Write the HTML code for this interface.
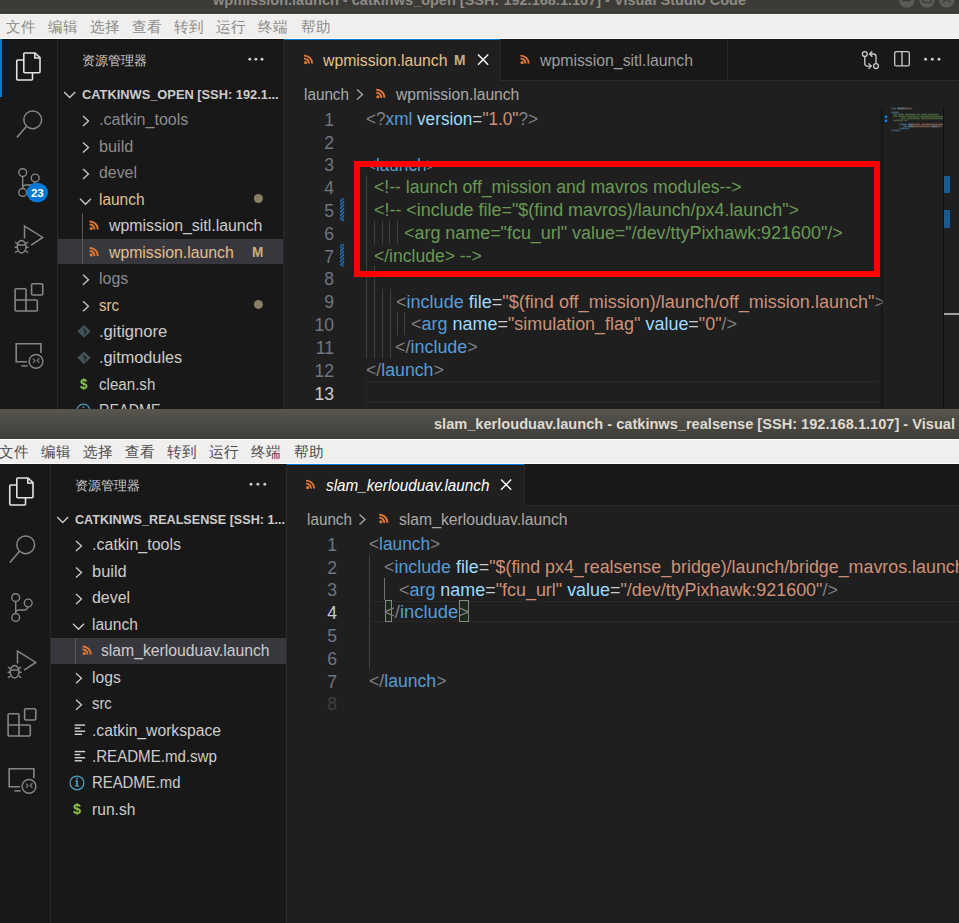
<!DOCTYPE html>
<html><head><meta charset="utf-8"><style>html,body{margin:0;padding:0}
body{width:959px;height:923px;overflow:hidden;position:relative;background:#181818;font-family:"Liberation Sans",sans-serif}
.t{position:absolute;white-space:pre;transform-origin:0 0}
</style></head><body>
<div style="position:absolute;left:0px;top:0px;width:959px;height:14px;background:#3c3b37;"></div>
<div class="t" style="left:213.00px;top:-8.10px;font-size:15px;line-height:15px;color:#8d8b84;font-weight:bold;font-style:normal;transform:scaleX(0.9678);">wpmission.launch - catkinws_open [SSH: 192.168.1.107] - Visual Studio Code</div>
<svg style="position:absolute;left:0;top:0" width="959" height="923"><circle cx="906.8" cy="0" r="7.8" fill="#5b5a55"/><circle cx="927" cy="0" r="7.8" fill="#5b5a55"/><circle cx="946.7" cy="0" r="7.8" fill="#5b5a55"/><path d="M902.5 0.5 H911" stroke="#3c3b37" stroke-width="1.6"/><rect x="923" y="-3" width="8" height="5.5" fill="none" stroke="#3c3b37" stroke-width="1.2"/><path d="M943 2.5 L946.7 -1 L950.4 2.5" fill="none" stroke="#3c3b37" stroke-width="1.3"/></svg>
<div style="position:absolute;left:0px;top:14px;width:959px;height:25px;background:#f0efed;"></div>
<div style="position:absolute;left:0px;top:14px;width:959px;height:1px;background:#fafaf9;"></div>
<div style="position:absolute;left:0px;top:38px;width:959px;height:1px;background:#fbfbfa;"></div>
<div class="t" style="left:6.40px;top:19.93px;font-size:14.5px;line-height:14.5px;color:#8c8c8c;font-weight:normal;font-style:normal;transform:scaleX(0.9733);">文件</div>
<div class="t" style="left:47.90px;top:19.93px;font-size:14.5px;line-height:14.5px;color:#8c8c8c;font-weight:normal;font-style:normal;transform:scaleX(0.9733);">编辑</div>
<div class="t" style="left:90.40px;top:19.93px;font-size:14.5px;line-height:14.5px;color:#8c8c8c;font-weight:normal;font-style:normal;transform:scaleX(0.9733);">选择</div>
<div class="t" style="left:132.00px;top:19.93px;font-size:14.5px;line-height:14.5px;color:#8c8c8c;font-weight:normal;font-style:normal;transform:scaleX(0.9733);">查看</div>
<div class="t" style="left:173.80px;top:19.93px;font-size:14.5px;line-height:14.5px;color:#8c8c8c;font-weight:normal;font-style:normal;transform:scaleX(0.9733);">转到</div>
<div class="t" style="left:216.00px;top:19.93px;font-size:14.5px;line-height:14.5px;color:#8c8c8c;font-weight:normal;font-style:normal;transform:scaleX(0.9733);">运行</div>
<div class="t" style="left:258.00px;top:19.93px;font-size:14.5px;line-height:14.5px;color:#8c8c8c;font-weight:normal;font-style:normal;transform:scaleX(0.9733);">终端</div>
<div class="t" style="left:300.70px;top:19.93px;font-size:14.5px;line-height:14.5px;color:#8c8c8c;font-weight:normal;font-style:normal;transform:scaleX(0.9733);">帮助</div>
<div style="position:absolute;left:0px;top:39px;width:957px;height:370px;background:#181818;"></div>
<div style="position:absolute;left:0px;top:39px;width:283px;height:1px;background:#111111;"></div>
<div style="position:absolute;left:57px;top:40px;width:1px;height:369px;background:#2b2b2b;"></div>
<div style="position:absolute;left:283px;top:39px;width:1px;height:370px;background:#2b2b2b;"></div>
<div style="position:absolute;left:284px;top:39px;width:675px;height:370px;background:#1f1f1f;"></div>
<div style="position:absolute;left:0px;top:39px;width:2px;height:58px;background:#0078d4;"></div>
<svg style="position:absolute;left:0;top:0" width="959" height="923"><path d="M23.8 60 H17.75 Q16.75 60 16.75 61 V79 Q16.75 80 17.75 80 H31.5 Q32.5 80 32.5 79 V72.8" fill="none" stroke="#e4e4e4" stroke-width="1.6"/><path d="M24.8 53 H35 L40 57.6 V71.8 Q40 72.8 39 72.8 H24.8 Q23.8 72.8 23.8 71.8 V54 Q23.8 53 24.8 53 Z" fill="none" stroke="#e4e4e4" stroke-width="1.6"/><path d="M34.8 53.2 V58 H39.8" fill="none" stroke="#e4e4e4" stroke-width="1.6"/><circle cx="32.7" cy="119.8" r="8.9" fill="none" stroke="#868686" stroke-width="1.5"/><path d="M26.3 126.6 L16.9 137.6" stroke="#868686" stroke-width="1.6"/><circle cx="22.7" cy="172.6" r="3.9" fill="none" stroke="#868686" stroke-width="1.4"/><circle cx="35.2" cy="178" r="3.9" fill="none" stroke="#868686" stroke-width="1.4"/><circle cx="22.7" cy="192.4" r="3.9" fill="none" stroke="#868686" stroke-width="1.4"/><path d="M22.7 176.5 V188.5" stroke="#868686" stroke-width="1.4"/><path d="M22.7 187 Q23 185 26.5 185 H31 Q34 185 35 182" fill="none" stroke="#868686" stroke-width="1.4"/><ellipse cx="37.3" cy="192.5" rx="10.7" ry="9.8" fill="#0078d4"/><text x="37.3" y="197.3" text-anchor="middle" font-family="Liberation Sans" font-weight="bold" font-size="11.5" fill="#ffffff">23</text><path d="M24.5 238.4 V226 L42.75 237.4 L31.1 245.2" fill="none" stroke="#868686" stroke-width="1.5" stroke-linejoin="miter"/><ellipse cx="21.6" cy="246.8" rx="4.4" ry="6.2" fill="none" stroke="#868686" stroke-width="1.5"/><path d="M17.2 245 H26" stroke="#868686" stroke-width="1.5"/><path d="M15 242 L17.6 243.6 M28.2 242 L25.6 243.6 M14.6 247.3 H17.2 M28.6 247.3 H26 M15 252.6 L17.6 251 M28.2 252.6 L25.6 251" stroke="#868686" stroke-width="1.4"/><path d="M16.1 288.8 H25 Q26 288.8 26 289.8 V300 H36.3 Q37.3 300 37.3 301 V310 Q37.3 311 36.3 311 H16.1 Q15.1 311 15.1 310 V289.8 Q15.1 288.8 16.1 288.8 Z M15.1 300 H26 V311" fill="none" stroke="#868686" stroke-width="1.6"/><rect x="31.6" y="283.7" width="11.15" height="11.3" rx="1.2" fill="none" stroke="#868686" stroke-width="1.6"/><path d="M27 361.8 H16.2 V343.7 H40.9 V353" fill="none" stroke="#868686" stroke-width="1.6"/><path d="M21.4 365.9 H27.6" stroke="#868686" stroke-width="1.5"/><circle cx="36" cy="361.3" r="6.9" fill="none" stroke="#868686" stroke-width="1.5"/><path d="M33 358.6 L35 360.8 L33 363 M39.4 358.2 L37.2 360.4 L39.4 362.6" fill="none" stroke="#868686" stroke-width="1.1"/></svg>
<div class="t" style="left:82.00px;top:53.50px;font-size:13px;line-height:13px;color:#cccccc;font-weight:normal;font-style:normal;transform:scaleX(1.0000);">资源管理器</div>
<svg style="position:absolute;left:0;top:0" width="959" height="923"><circle cx="249.8" cy="59.3" r="1.45" fill="#cccccc"/><circle cx="255.9" cy="59.3" r="1.45" fill="#cccccc"/><circle cx="262" cy="59.3" r="1.45" fill="#cccccc"/></svg>
<svg style="position:absolute;left:0;top:0" width="959" height="923"><path d="M64.2 92 L69.7 97.5 L75.2 92" fill="none" stroke="#cccccc" stroke-width="1.3"/></svg>
<div class="t" style="left:82.20px;top:88.20px;font-size:13px;line-height:13px;color:#cccccc;font-weight:bold;font-style:normal;transform:scaleX(0.9872);">CATKINWS_OPEN [SSH: 192.1...</div>
<div style="position:absolute;left:58px;top:238.75px;width:225px;height:25.65px;background:#37373d;"></div>
<div style="position:absolute;left:82px;top:213px;width:1px;height:51.4px;background:#585858;"></div>
<div class="t" style="left:99.00px;top:112.26px;font-size:16px;line-height:16px;color:#8c8c8c;font-weight:normal;font-style:normal;transform:scaleX(1.0052);">.catkin_tools</div>
<div class="t" style="left:99.00px;top:138.73px;font-size:16px;line-height:16px;color:#8c8c8c;font-weight:normal;font-style:normal;transform:scaleX(1.0144);">build</div>
<div class="t" style="left:99.00px;top:165.20px;font-size:16px;line-height:16px;color:#8c8c8c;font-weight:normal;font-style:normal;transform:scaleX(0.9908);">devel</div>
<div class="t" style="left:99.00px;top:191.67px;font-size:16px;line-height:16px;color:#e2c08d;font-weight:normal;font-style:normal;transform:scaleX(0.9649);">launch</div>
<div class="t" style="left:108.60px;top:218.14px;font-size:16px;line-height:16px;color:#cccccc;font-weight:normal;font-style:normal;transform:scaleX(0.9914);">wpmission_sitl.launch</div>
<div class="t" style="left:108.60px;top:244.61px;font-size:16px;line-height:16px;color:#e2c08d;font-weight:normal;font-style:normal;transform:scaleX(0.9875);">wpmission.launch</div>
<div class="t" style="left:99.00px;top:271.08px;font-size:16px;line-height:16px;color:#8c8c8c;font-weight:normal;font-style:normal;transform:scaleX(0.9946);">logs</div>
<div class="t" style="left:99.00px;top:297.55px;font-size:16px;line-height:16px;color:#e2c08d;font-weight:normal;font-style:normal;transform:scaleX(0.9330);">src</div>
<div class="t" style="left:99.00px;top:324.02px;font-size:16px;line-height:16px;color:#cccccc;font-weight:normal;font-style:normal;transform:scaleX(1.0376);">.gitignore</div>
<div class="t" style="left:99.00px;top:350.49px;font-size:16px;line-height:16px;color:#cccccc;font-weight:normal;font-style:normal;transform:scaleX(1.0168);">.gitmodules</div>
<div class="t" style="left:80.40px;top:375.50px;font-size:15px;line-height:15px;color:#8dc149;font-weight:bold;font-style:normal;transform:scaleX(0.8869);">$</div>
<div class="t" style="left:99.00px;top:376.96px;font-size:16px;line-height:16px;color:#cccccc;font-weight:normal;font-style:normal;transform:scaleX(0.9447);">clean.sh</div>
<div class="t" style="left:99.00px;top:403.43px;font-size:16px;line-height:16px;color:#cccccc;font-weight:normal;font-style:normal;transform:scaleX(0.9013);">README</div>
<svg style="position:absolute;left:0;top:0" width="959" height="923"><path d="M83 116.0 L88.5 121.0 L83 126.0" fill="none" stroke="#cccccc" stroke-width="1.3"/><path d="M83 142.46999999999997 L88.5 147.46999999999997 L83 152.46999999999997" fill="none" stroke="#cccccc" stroke-width="1.3"/><path d="M83 168.94 L88.5 173.94 L83 178.94" fill="none" stroke="#cccccc" stroke-width="1.3"/><path d="M80 198.70999999999998 L85.5 204.20999999999998 L91 198.70999999999998" fill="none" stroke="#cccccc" stroke-width="1.3"/><circle cx="91.19999999999999" cy="228.48" r="1.6" fill="#e37933"/><path d="M89.6 224.48 A4.6 4.6 0 0 1 94.5 229.48" fill="none" stroke="#e37933" stroke-width="1.9"/><path d="M89.6 221.48 A7.9 7.9 0 0 1 97.8 229.48" fill="none" stroke="#e37933" stroke-width="1.9"/><circle cx="91.19999999999999" cy="254.94999999999996" r="1.6" fill="#e37933"/><path d="M89.6 250.94999999999996 A4.6 4.6 0 0 1 94.5 255.94999999999996" fill="none" stroke="#e37933" stroke-width="1.9"/><path d="M89.6 247.94999999999996 A7.9 7.9 0 0 1 97.8 255.94999999999996" fill="none" stroke="#e37933" stroke-width="1.9"/><path d="M83 274.82 L88.5 279.82 L83 284.82" fill="none" stroke="#cccccc" stroke-width="1.3"/><path d="M83 301.28999999999996 L88.5 306.28999999999996 L83 311.28999999999996" fill="none" stroke="#cccccc" stroke-width="1.3"/><path d="M84 324.96 L90.6 331.36 L84 337.76 L77.4 331.36 Z" fill="#41535b"/><path d="M83 328.56 L85 330.56 V334.56 M85 330.56 L86.5 332.06" stroke="#181818" stroke-width="1.1" fill="none"/><path d="M84 351.42999999999995 L90.6 357.83 L84 364.22999999999996 L77.4 357.83 Z" fill="#41535b"/><path d="M83 355.03 L85 357.03 V361.03 M85 357.03 L86.5 358.53" stroke="#181818" stroke-width="1.1" fill="none"/><circle cx="83.4" cy="410.77" r="6.6" fill="none" stroke="#519aba" stroke-width="1.3"/><rect x="82.7" y="409.46999999999997" width="1.5" height="5" fill="#519aba"/><rect x="82.7" y="406.46999999999997" width="1.5" height="1.6" fill="#519aba"/></svg>
<svg style="position:absolute;left:0;top:0" width="959" height="923"><circle cx="258.4" cy="198.5" r="4.5" fill="#8a7d65"/><circle cx="258.4" cy="304.4" r="4.5" fill="#8a7d65"/></svg>
<div class="t" style="left:252.40px;top:245.45px;font-size:14px;line-height:14px;color:#c9ae84;font-weight:bold;font-style:normal;transform:scaleX(0.9681);">M</div>
<div style="position:absolute;left:284px;top:39px;width:675px;height:41px;background:#181818;"></div>
<div style="position:absolute;left:284px;top:80px;width:675px;height:1px;background:#2b2b2b;"></div>
<div style="position:absolute;left:284px;top:39px;width:216px;height:42px;background:#1f1f1f;"></div>
<div style="position:absolute;left:284px;top:39px;width:216px;height:1px;background:#0078d4;"></div>
<div style="position:absolute;left:500px;top:39px;width:1px;height:41px;background:#2b2b2b;"></div>
<div style="position:absolute;left:727px;top:39px;width:1px;height:41px;background:#2b2b2b;"></div>
<svg style="position:absolute;left:0;top:0" width="959" height="923"><circle cx="305.6" cy="62.6" r="1.6" fill="#e37933"/><path d="M304 58.6 A4.6 4.6 0 0 1 308.9 63.6" fill="none" stroke="#e37933" stroke-width="1.9"/><path d="M304 55.6 A7.9 7.9 0 0 1 312.2 63.6" fill="none" stroke="#e37933" stroke-width="1.9"/><circle cx="522.1" cy="62.6" r="1.6" fill="#e37933"/><path d="M520.5 58.6 A4.6 4.6 0 0 1 525.4 63.6" fill="none" stroke="#e37933" stroke-width="1.9"/><path d="M520.5 55.6 A7.9 7.9 0 0 1 528.7 63.6" fill="none" stroke="#e37933" stroke-width="1.9"/><circle cx="377.90000000000003" cy="96.8" r="1.6" fill="#e37933"/><path d="M376.3 92.8 A4.6 4.6 0 0 1 381.2 97.8" fill="none" stroke="#e37933" stroke-width="1.9"/><path d="M376.3 89.8 A7.9 7.9 0 0 1 384.5 97.8" fill="none" stroke="#e37933" stroke-width="1.9"/><path d="M478 54.5 L488.2 64.7 M488.2 54.5 L478 64.7" stroke="#ffffff" stroke-width="1.4"/><path d="M357 89.5 L362.5 94.5 L357 99.5" fill="none" stroke="#a9a9a9" stroke-width="1.3"/></svg>
<div class="t" style="left:322.50px;top:52.66px;font-size:16px;line-height:16px;color:#e2c08d;font-weight:normal;font-style:normal;transform:scaleX(0.9859);">wpmission.launch</div>
<div class="t" style="left:454.20px;top:53.35px;font-size:14px;line-height:14px;color:#c9ae84;font-weight:bold;font-style:normal;transform:scaleX(0.9853);">M</div>
<div class="t" style="left:539.50px;top:52.66px;font-size:16px;line-height:16px;color:#9d9d9d;font-weight:normal;font-style:normal;transform:scaleX(0.9888);">wpmission_sitl.launch</div>
<svg style="position:absolute;left:0;top:0" width="959" height="923"><circle cx="864.8" cy="54" r="2.45" fill="none" stroke="#cccccc" stroke-width="1.3"/><circle cx="876" cy="66.1" r="2.45" fill="none" stroke="#cccccc" stroke-width="1.3"/><path d="M864.8 56.5 V63.6 Q864.8 66.1 867.3 66.1 H871.2" fill="none" stroke="#cccccc" stroke-width="1.3"/><path d="M868.5 63.4 L871.2 66.1 L868.5 68.8" fill="none" stroke="#cccccc" stroke-width="1.3"/><path d="M876 63.6 V56.5 Q876 54 873.5 54 H869.6" fill="none" stroke="#cccccc" stroke-width="1.3"/><path d="M872.3 51.3 L869.6 54 L872.3 56.7" fill="none" stroke="#cccccc" stroke-width="1.3"/><rect x="894.7" y="51.6" width="14.6" height="14.3" rx="1.5" fill="none" stroke="#cccccc" stroke-width="1.3"/><path d="M902 51.6 V65.9" stroke="#cccccc" stroke-width="1.3"/><circle cx="925.6" cy="59.3" r="1.45" fill="#cccccc"/><circle cx="932.3" cy="59.3" r="1.45" fill="#cccccc"/><circle cx="939" cy="59.3" r="1.45" fill="#cccccc"/></svg>
<div class="t" style="left:303.80px;top:86.96px;font-size:16px;line-height:16px;color:#a9a9a9;font-weight:normal;font-style:normal;transform:scaleX(0.9543);">launch</div>
<div class="t" style="left:396.00px;top:86.96px;font-size:16px;line-height:16px;color:#a9a9a9;font-weight:normal;font-style:normal;transform:scaleX(0.9764);">wpmission.launch</div>
<div class="t" style="left:294.00px;top:111.70px;font-size:17.6px;line-height:17.6px;color:#6e7681;font-weight:normal;font-style:normal;width:40px;text-align:right;">1</div>
<div class="t" style="left:294.00px;top:134.52px;font-size:17.6px;line-height:17.6px;color:#6e7681;font-weight:normal;font-style:normal;width:40px;text-align:right;">2</div>
<div class="t" style="left:294.00px;top:157.34px;font-size:17.6px;line-height:17.6px;color:#6e7681;font-weight:normal;font-style:normal;width:40px;text-align:right;">3</div>
<div class="t" style="left:294.00px;top:180.16px;font-size:17.6px;line-height:17.6px;color:#6e7681;font-weight:normal;font-style:normal;width:40px;text-align:right;">4</div>
<div class="t" style="left:294.00px;top:202.98px;font-size:17.6px;line-height:17.6px;color:#6e7681;font-weight:normal;font-style:normal;width:40px;text-align:right;">5</div>
<div class="t" style="left:294.00px;top:225.80px;font-size:17.6px;line-height:17.6px;color:#6e7681;font-weight:normal;font-style:normal;width:40px;text-align:right;">6</div>
<div class="t" style="left:294.00px;top:248.62px;font-size:17.6px;line-height:17.6px;color:#6e7681;font-weight:normal;font-style:normal;width:40px;text-align:right;">7</div>
<div class="t" style="left:294.00px;top:271.44px;font-size:17.6px;line-height:17.6px;color:#6e7681;font-weight:normal;font-style:normal;width:40px;text-align:right;">8</div>
<div class="t" style="left:294.00px;top:294.26px;font-size:17.6px;line-height:17.6px;color:#6e7681;font-weight:normal;font-style:normal;width:40px;text-align:right;">9</div>
<div class="t" style="left:294.00px;top:317.08px;font-size:17.6px;line-height:17.6px;color:#6e7681;font-weight:normal;font-style:normal;width:40px;text-align:right;">10</div>
<div class="t" style="left:294.00px;top:339.90px;font-size:17.6px;line-height:17.6px;color:#6e7681;font-weight:normal;font-style:normal;width:40px;text-align:right;">11</div>
<div class="t" style="left:294.00px;top:362.72px;font-size:17.6px;line-height:17.6px;color:#6e7681;font-weight:normal;font-style:normal;width:40px;text-align:right;">12</div>
<div class="t" style="left:294.00px;top:385.54px;font-size:17.6px;line-height:17.6px;color:#cccccc;font-weight:normal;font-style:normal;width:40px;text-align:right;">13</div>
<div style="position:absolute;left:366px;top:381px;width:577px;height:22px;background:transparent;box-sizing:border-box;border:1px solid #282828;"></div>
<div style="position:absolute;left:366.4px;top:174.96px;width:1px;height:182.94000000000003px;background:#404040;"></div>
<div style="position:absolute;left:374.4px;top:220.6px;width:1px;height:23.200000000000017px;background:#404040;"></div>
<div style="position:absolute;left:381.9px;top:220.6px;width:1px;height:23.200000000000017px;background:#404040;"></div>
<div style="position:absolute;left:389.4px;top:220.6px;width:1px;height:23.200000000000017px;background:#404040;"></div>
<div style="position:absolute;left:396.9px;top:220.6px;width:1px;height:23.200000000000017px;background:#404040;"></div>
<div style="position:absolute;left:374.4px;top:266.24px;width:1px;height:91.66000000000003px;background:#404040;"></div>
<div style="position:absolute;left:381.5px;top:289.06000000000006px;width:1px;height:68.83999999999997px;background:#404040;"></div>
<div style="position:absolute;left:389.6px;top:289.06000000000006px;width:1px;height:68.83999999999997px;background:#404040;"></div>
<div style="position:absolute;left:396.5px;top:311.88px;width:1px;height:23.19999999999999px;background:#404040;"></div>
<div style="position:absolute;left:404.4px;top:311.88px;width:1px;height:23.19999999999999px;background:#404040;"></div>
<svg style="position:absolute;left:0;top:0" width="959" height="923"><defs><pattern id="hatch" width="2.5" height="4" patternUnits="userSpaceOnUse" patternTransform="rotate(45)"><rect width="1.3" height="4" fill="#1a80dc"/></pattern></defs><rect x="340" y="198.18" width="4.1" height="22.80000000000001" rx="1" fill="url(#hatch)"/><rect x="340" y="243.82000000000005" width="4.1" height="22.80000000000001" rx="1" fill="url(#hatch)"/></svg>
<div class="t" style="left:366.20px;top:111.00px;font-size:17.6px;line-height:17.6px;color:#cccccc;font-weight:normal;font-style:normal;transform:scaleX(0.9754);"><span style="color:#808080">&lt;?</span><span style="color:#569cd6">xml</span> <span style="color:#9cdcfe">version</span><span style="color:#cccccc">=</span><span style="color:#ce9178">&quot;1.0&quot;</span><span style="color:#808080">?&gt;</span></div>
<div class="t" style="left:366.20px;top:156.64px;font-size:17.6px;line-height:17.6px;color:#cccccc;font-weight:normal;font-style:normal;transform:scaleX(0.9735);"><span style="color:#808080">&lt;</span><span style="color:#569cd6">launch</span><span style="color:#808080">&gt;</span></div>
<div class="t" style="left:374.00px;top:179.46px;font-size:17.6px;line-height:17.6px;color:#cccccc;font-weight:normal;font-style:normal;transform:scaleX(1.0007);"><span style="color:#6a9955">&lt;!-- launch off_mission and mavros modules--&gt;</span></div>
<div class="t" style="left:374.00px;top:202.28px;font-size:17.6px;line-height:17.6px;color:#cccccc;font-weight:normal;font-style:normal;transform:scaleX(1.0183);"><span style="color:#6a9955">&lt;!-- &lt;include file=&quot;$(find mavros)/launch/px4.launch&quot;&gt;</span></div>
<div class="t" style="left:404.00px;top:225.10px;font-size:17.6px;line-height:17.6px;color:#cccccc;font-weight:normal;font-style:normal;transform:scaleX(1.0181);"><span style="color:#6a9955">&lt;arg name=&quot;fcu_url&quot; value=&quot;/dev/ttyPixhawk:921600&quot;/&gt;</span></div>
<div class="t" style="left:374.00px;top:247.92px;font-size:17.6px;line-height:17.6px;color:#cccccc;font-weight:normal;font-style:normal;transform:scaleX(0.9965);"><span style="color:#6a9955">&lt;/include&gt; --&gt;</span></div>
<div class="t" style="left:395.60px;top:293.56px;font-size:17.6px;line-height:17.6px;color:#cccccc;font-weight:normal;font-style:normal;transform:scaleX(1.0253);"><span style="color:#808080">&lt;</span><span style="color:#569cd6">include</span> <span style="color:#9cdcfe">file</span><span style="color:#cccccc">=</span><span style="color:#ce9178">&quot;$(find off_mission)/launch/off_mission.launch&quot;</span><span style="color:#808080">&gt;</span></div>
<div class="t" style="left:411.30px;top:316.38px;font-size:17.6px;line-height:17.6px;color:#cccccc;font-weight:normal;font-style:normal;transform:scaleX(1.0208);"><span style="color:#808080">&lt;</span><span style="color:#569cd6">arg</span> <span style="color:#9cdcfe">name</span><span style="color:#cccccc">=</span><span style="color:#ce9178">&quot;simulation_flag&quot;</span> <span style="color:#9cdcfe">value</span><span style="color:#cccccc">=</span><span style="color:#ce9178">&quot;0&quot;</span><span style="color:#808080">/&gt;</span></div>
<div class="t" style="left:395.20px;top:339.20px;font-size:17.6px;line-height:17.6px;color:#cccccc;font-weight:normal;font-style:normal;transform:scaleX(1.0195);"><span style="color:#808080">&lt;/</span><span style="color:#569cd6">include</span><span style="color:#808080">&gt;</span></div>
<div class="t" style="left:366.20px;top:362.02px;font-size:17.6px;line-height:17.6px;color:#cccccc;font-weight:normal;font-style:normal;transform:scaleX(1.0063);"><span style="color:#808080">&lt;/</span><span style="color:#569cd6">launch</span><span style="color:#808080">&gt;</span></div>
<div style="position:absolute;left:883px;top:107px;width:60px;height:302px;background:#1f1f1f;"></div>
<div style="position:absolute;left:879px;top:107px;width:4px;height:302px;background:linear-gradient(to right, rgba(0,0,0,0), rgba(0,0,0,0.35));"></div>
<div style="position:absolute;left:943px;top:107px;width:1px;height:302px;background:#0f0f0f;"></div>
<div style="position:absolute;left:944px;top:107px;width:15px;height:302px;background:#1f1f1f;"></div>
<svg style="position:absolute;left:0;top:0" width="959" height="923"><rect x="891.2" y="107.6" width="2.0" height="1.7" fill="#808080" fill-opacity="0.45"/><rect x="893.2" y="107.6" width="3.0" height="1.7" fill="#569cd6" fill-opacity="0.45"/><rect x="897.2" y="107.6" width="7.0" height="1.7" fill="#9cdcfe" fill-opacity="0.45"/><rect x="904.2" y="107.6" width="1.0" height="1.7" fill="#cccccc" fill-opacity="0.45"/><rect x="905.2" y="107.6" width="5.0" height="1.7" fill="#ce9178" fill-opacity="0.45"/><rect x="910.2" y="107.6" width="2.0" height="1.7" fill="#808080" fill-opacity="0.45"/><rect x="891.2" y="111.6" width="1.0" height="1.7" fill="#808080" fill-opacity="0.45"/><rect x="892.2" y="111.6" width="6.0" height="1.7" fill="#569cd6" fill-opacity="0.45"/><rect x="898.2" y="111.6" width="1.0" height="1.7" fill="#808080" fill-opacity="0.45"/><rect x="893.2" y="113.6" width="4.0" height="1.7" fill="#6a9955" fill-opacity="0.45"/><rect x="898.2" y="113.6" width="6.0" height="1.7" fill="#6a9955" fill-opacity="0.45"/><rect x="905.2" y="113.6" width="11.0" height="1.7" fill="#6a9955" fill-opacity="0.45"/><rect x="917.2" y="113.6" width="3.0" height="1.7" fill="#6a9955" fill-opacity="0.45"/><rect x="921.2" y="113.6" width="6.0" height="1.7" fill="#6a9955" fill-opacity="0.45"/><rect x="928.2" y="113.6" width="10.0" height="1.7" fill="#6a9955" fill-opacity="0.45"/><rect x="893.2" y="115.6" width="4.0" height="1.7" fill="#6a9955" fill-opacity="0.45"/><rect x="898.2" y="115.6" width="8.0" height="1.7" fill="#6a9955" fill-opacity="0.45"/><rect x="907.2" y="115.6" width="12.0" height="1.7" fill="#6a9955" fill-opacity="0.45"/><rect x="920.2" y="115.6" width="22.799999999999955" height="1.7" fill="#6a9955" fill-opacity="0.45"/><rect x="901.2" y="117.6" width="4.0" height="1.7" fill="#6a9955" fill-opacity="0.45"/><rect x="906.2" y="117.6" width="14.0" height="1.7" fill="#6a9955" fill-opacity="0.45"/><rect x="921.2" y="117.6" width="21.799999999999955" height="1.7" fill="#6a9955" fill-opacity="0.45"/><rect x="893.2" y="119.6" width="10.0" height="1.7" fill="#6a9955" fill-opacity="0.45"/><rect x="904.2" y="119.6" width="3.0" height="1.7" fill="#6a9955" fill-opacity="0.45"/><rect x="899.2" y="123.6" width="1.0" height="1.7" fill="#808080" fill-opacity="0.45"/><rect x="900.2" y="123.6" width="7.0" height="1.7" fill="#569cd6" fill-opacity="0.45"/><rect x="908.2" y="123.6" width="4.0" height="1.7" fill="#9cdcfe" fill-opacity="0.45"/><rect x="912.2" y="123.6" width="1.0" height="1.7" fill="#cccccc" fill-opacity="0.45"/><rect x="913.2" y="123.6" width="7.0" height="1.7" fill="#ce9178" fill-opacity="0.45"/><rect x="921.2" y="123.6" width="21.799999999999955" height="1.7" fill="#ce9178" fill-opacity="0.45"/><rect x="903.2" y="125.6" width="1.0" height="1.7" fill="#808080" fill-opacity="0.45"/><rect x="904.2" y="125.6" width="3.0" height="1.7" fill="#569cd6" fill-opacity="0.45"/><rect x="908.2" y="125.6" width="4.0" height="1.7" fill="#9cdcfe" fill-opacity="0.45"/><rect x="912.2" y="125.6" width="1.0" height="1.7" fill="#cccccc" fill-opacity="0.45"/><rect x="913.2" y="125.6" width="17.0" height="1.7" fill="#ce9178" fill-opacity="0.45"/><rect x="931.2" y="125.6" width="5.0" height="1.7" fill="#9cdcfe" fill-opacity="0.45"/><rect x="936.2" y="125.6" width="1.0" height="1.7" fill="#cccccc" fill-opacity="0.45"/><rect x="937.2" y="125.6" width="3.0" height="1.7" fill="#ce9178" fill-opacity="0.45"/><rect x="940.2" y="125.6" width="2.0" height="1.7" fill="#808080" fill-opacity="0.45"/><rect x="899.2" y="127.6" width="2.0" height="1.7" fill="#808080" fill-opacity="0.45"/><rect x="901.2" y="127.6" width="7.0" height="1.7" fill="#569cd6" fill-opacity="0.45"/><rect x="908.2" y="127.6" width="1.0" height="1.7" fill="#808080" fill-opacity="0.45"/><rect x="891.2" y="129.6" width="2.0" height="1.7" fill="#808080" fill-opacity="0.45"/><rect x="893.2" y="129.6" width="6.0" height="1.7" fill="#569cd6" fill-opacity="0.45"/><rect x="899.2" y="129.6" width="1.0" height="1.7" fill="#808080" fill-opacity="0.45"/><rect x="884.8" y="115.5" width="2.4" height="2.5" fill="#0a84ff"/><rect x="884.8" y="119.6" width="2.4" height="2.4" fill="#0a84ff"/></svg>
<div style="position:absolute;left:944px;top:176px;width:6px;height:17px;background:#1b5a8f;"></div>
<div style="position:absolute;left:944px;top:210px;width:6px;height:18px;background:#1b5a8f;"></div>
<div style="position:absolute;left:944px;top:313px;width:15px;height:2px;background:#a0a0a0;"></div>
<div style="position:absolute;left:354px;top:161px;width:526px;height:116px;background:transparent;box-sizing:border-box;border:6px solid #ff0000;"></div>
<div style="position:absolute;left:0px;top:409px;width:959px;height:30px;background:linear-gradient(#57554e,#3e3d39);"></div>
<div class="t" style="left:434.00px;top:415.70px;font-size:15px;line-height:15px;color:#dfdbd2;font-weight:bold;font-style:normal;transform:scaleX(0.9728);">slam_kerlouduav.launch - catkinws_realsense [SSH: 192.168.1.107] - Visual</div>
<div style="position:absolute;left:0px;top:439px;width:959px;height:25px;background:#f0efed;"></div>
<div style="position:absolute;left:0px;top:439px;width:959px;height:1px;background:#fafaf9;"></div>
<div style="position:absolute;left:0px;top:463px;width:959px;height:1px;background:#fbfbfa;"></div>
<div class="t" style="left:-0.60px;top:444.93px;font-size:14.5px;line-height:14.5px;color:#4c4c4c;font-weight:normal;font-style:normal;transform:scaleX(0.9733);">文件</div>
<div class="t" style="left:40.90px;top:444.93px;font-size:14.5px;line-height:14.5px;color:#4c4c4c;font-weight:normal;font-style:normal;transform:scaleX(0.9733);">编辑</div>
<div class="t" style="left:83.40px;top:444.93px;font-size:14.5px;line-height:14.5px;color:#4c4c4c;font-weight:normal;font-style:normal;transform:scaleX(0.9733);">选择</div>
<div class="t" style="left:125.00px;top:444.93px;font-size:14.5px;line-height:14.5px;color:#4c4c4c;font-weight:normal;font-style:normal;transform:scaleX(0.9733);">查看</div>
<div class="t" style="left:166.80px;top:444.93px;font-size:14.5px;line-height:14.5px;color:#4c4c4c;font-weight:normal;font-style:normal;transform:scaleX(0.9733);">转到</div>
<div class="t" style="left:209.00px;top:444.93px;font-size:14.5px;line-height:14.5px;color:#4c4c4c;font-weight:normal;font-style:normal;transform:scaleX(0.9733);">运行</div>
<div class="t" style="left:251.00px;top:444.93px;font-size:14.5px;line-height:14.5px;color:#4c4c4c;font-weight:normal;font-style:normal;transform:scaleX(0.9733);">终端</div>
<div class="t" style="left:293.70px;top:444.93px;font-size:14.5px;line-height:14.5px;color:#4c4c4c;font-weight:normal;font-style:normal;transform:scaleX(0.9733);">帮助</div>
<div style="position:absolute;left:0px;top:464px;width:959px;height:459px;background:#181818;"></div>
<div style="position:absolute;left:50px;top:464px;width:1px;height:459px;background:#2b2b2b;"></div>
<div style="position:absolute;left:286px;top:464px;width:1px;height:459px;background:#2b2b2b;"></div>
<div style="position:absolute;left:287px;top:464px;width:672px;height:459px;background:#1f1f1f;"></div>
<svg style="position:absolute;left:0;top:0" width="959" height="923"><path d="M16.8 485 H10.75 Q9.75 485 9.75 486 V504 Q9.75 505 10.75 505 H24.5 Q25.5 505 25.5 504 V497.8" fill="none" stroke="#e4e4e4" stroke-width="1.6"/><path d="M17.8 478 H28 L33 482.6 V496.8 Q33 497.8 32 497.8 H17.8 Q16.8 497.8 16.8 496.8 V479 Q16.8 478 17.8 478 Z" fill="none" stroke="#e4e4e4" stroke-width="1.6"/><path d="M27.799999999999997 478.2 V483 H32.8" fill="none" stroke="#e4e4e4" stroke-width="1.6"/><circle cx="25.700000000000003" cy="544.8" r="8.9" fill="none" stroke="#868686" stroke-width="1.5"/><path d="M19.3 551.6 L9.899999999999999 562.6" stroke="#868686" stroke-width="1.6"/><circle cx="15.7" cy="597.6" r="3.9" fill="none" stroke="#868686" stroke-width="1.4"/><circle cx="28.200000000000003" cy="603" r="3.9" fill="none" stroke="#868686" stroke-width="1.4"/><circle cx="15.7" cy="617.4" r="3.9" fill="none" stroke="#868686" stroke-width="1.4"/><path d="M15.7 601.5 V613.5" stroke="#868686" stroke-width="1.4"/><path d="M15.7 612 Q16 610 19.5 610 H24 Q27 610 28 607" fill="none" stroke="#868686" stroke-width="1.4"/><path d="M17.5 663.4 V651 L35.75 662.4 L24.1 670.2" fill="none" stroke="#868686" stroke-width="1.5" stroke-linejoin="miter"/><ellipse cx="14.600000000000001" cy="671.8" rx="4.4" ry="6.2" fill="none" stroke="#868686" stroke-width="1.5"/><path d="M10.2 670 H19" stroke="#868686" stroke-width="1.5"/><path d="M8 667 L10.600000000000001 668.6 M21.2 667 L18.6 668.6 M7.6 672.3 H10.2 M21.6 672.3 H19 M8 677.6 L10.600000000000001 676 M21.2 677.6 L18.6 676" stroke="#868686" stroke-width="1.4"/><path d="M9.100000000000001 713.8 H18 Q19 713.8 19 714.8 V725 H29.299999999999997 Q30.299999999999997 725 30.299999999999997 726 V735 Q30.299999999999997 736 29.299999999999997 736 H9.100000000000001 Q8.1 736 8.1 735 V714.8 Q8.1 713.8 9.100000000000001 713.8 Z M8.1 725 H19 V736" fill="none" stroke="#868686" stroke-width="1.6"/><rect x="24.6" y="708.7" width="11.15" height="11.3" rx="1.2" fill="none" stroke="#868686" stroke-width="1.6"/><path d="M20 786.8 H9.2 V768.7 H33.9 V778" fill="none" stroke="#868686" stroke-width="1.6"/><path d="M14.399999999999999 790.9 H20.6" stroke="#868686" stroke-width="1.5"/><circle cx="29" cy="786.3" r="6.9" fill="none" stroke="#868686" stroke-width="1.5"/><path d="M26 783.6 L28 785.8 L26 788 M32.4 783.2 L30.200000000000003 785.4 L32.4 787.6" fill="none" stroke="#868686" stroke-width="1.1"/></svg>
<div class="t" style="left:75.00px;top:478.70px;font-size:13px;line-height:13px;color:#cccccc;font-weight:normal;font-style:normal;transform:scaleX(1.0000);">资源管理器</div>
<svg style="position:absolute;left:0;top:0" width="959" height="923"><circle cx="251" cy="484.3" r="1.45" fill="#cccccc"/><circle cx="257.9" cy="484.3" r="1.45" fill="#cccccc"/><circle cx="264.8" cy="484.3" r="1.45" fill="#cccccc"/></svg>
<svg style="position:absolute;left:0;top:0" width="959" height="923"><path d="M57.2 517 L62.7 522.5 L68.2 517" fill="none" stroke="#cccccc" stroke-width="1.3"/></svg>
<div class="t" style="left:74.80px;top:513.20px;font-size:13px;line-height:13px;color:#cccccc;font-weight:bold;font-style:normal;transform:scaleX(0.9702);">CATKINWS_REALSENSE [SSH: 1...</div>
<div style="position:absolute;left:51px;top:638px;width:235px;height:25.75px;background:#37373d;"></div>
<div style="position:absolute;left:75px;top:638px;width:1px;height:25.75px;background:#585858;"></div>
<div class="t" style="left:92.00px;top:537.26px;font-size:16px;line-height:16px;color:#cccccc;font-weight:normal;font-style:normal;transform:scaleX(1.0018);">.catkin_tools</div>
<div class="t" style="left:92.00px;top:563.73px;font-size:16px;line-height:16px;color:#cccccc;font-weight:normal;font-style:normal;transform:scaleX(1.0262);">build</div>
<div class="t" style="left:92.00px;top:590.20px;font-size:16px;line-height:16px;color:#cccccc;font-weight:normal;font-style:normal;transform:scaleX(0.9961);">devel</div>
<div class="t" style="left:92.00px;top:616.67px;font-size:16px;line-height:16px;color:#cccccc;font-weight:normal;font-style:normal;transform:scaleX(0.9712);">launch</div>
<div class="t" style="left:101.30px;top:643.14px;font-size:16px;line-height:16px;color:#cccccc;font-weight:normal;font-style:normal;transform:scaleX(0.9839);">slam_kerlouduav.launch</div>
<div class="t" style="left:92.00px;top:669.61px;font-size:16px;line-height:16px;color:#cccccc;font-weight:normal;font-style:normal;transform:scaleX(0.9809);">logs</div>
<div class="t" style="left:92.00px;top:696.08px;font-size:16px;line-height:16px;color:#cccccc;font-weight:normal;font-style:normal;transform:scaleX(0.9284);">src</div>
<div class="t" style="left:92.00px;top:722.55px;font-size:16px;line-height:16px;color:#cccccc;font-weight:normal;font-style:normal;transform:scaleX(0.9808);">.catkin_workspace</div>
<div class="t" style="left:92.00px;top:749.02px;font-size:16px;line-height:16px;color:#cccccc;font-weight:normal;font-style:normal;transform:scaleX(0.9429);">.README.md.swp</div>
<div class="t" style="left:92.00px;top:775.49px;font-size:16px;line-height:16px;color:#cccccc;font-weight:normal;font-style:normal;transform:scaleX(0.9304);">README.md</div>
<div class="t" style="left:73.40px;top:800.50px;font-size:15px;line-height:15px;color:#8dc149;font-weight:bold;font-style:normal;transform:scaleX(0.9588);">$</div>
<div class="t" style="left:92.00px;top:801.96px;font-size:16px;line-height:16px;color:#cccccc;font-weight:normal;font-style:normal;transform:scaleX(0.9760);">run.sh</div>
<svg style="position:absolute;left:0;top:0" width="959" height="923"><path d="M76 541.0 L81.5 546.0 L76 551.0" fill="none" stroke="#cccccc" stroke-width="1.3"/><path d="M76 567.47 L81.5 572.47 L76 577.47" fill="none" stroke="#cccccc" stroke-width="1.3"/><path d="M76 593.94 L81.5 598.94 L76 603.94" fill="none" stroke="#cccccc" stroke-width="1.3"/><path d="M73 623.7099999999999 L78.5 629.2099999999999 L84 623.7099999999999" fill="none" stroke="#cccccc" stroke-width="1.3"/><circle cx="84.19999999999999" cy="653.48" r="1.6" fill="#e37933"/><path d="M82.6 649.48 A4.6 4.6 0 0 1 87.5 654.48" fill="none" stroke="#e37933" stroke-width="1.9"/><path d="M82.6 646.48 A7.9 7.9 0 0 1 90.8 654.48" fill="none" stroke="#e37933" stroke-width="1.9"/><path d="M76 673.35 L81.5 678.35 L76 683.35" fill="none" stroke="#cccccc" stroke-width="1.3"/><path d="M76 699.8199999999999 L81.5 704.8199999999999 L76 709.8199999999999" fill="none" stroke="#cccccc" stroke-width="1.3"/><rect x="74.7" y="724.3899999999999" width="10.4" height="1.4" fill="#d4d4d4"/><rect x="74.7" y="727.4599999999999" width="5.6" height="1.4" fill="#d4d4d4"/><rect x="74.7" y="730.5299999999999" width="10.4" height="1.4" fill="#d4d4d4"/><rect x="74.7" y="733.5999999999999" width="7.3" height="1.4" fill="#d4d4d4"/><rect x="74.7" y="750.8599999999999" width="10.4" height="1.4" fill="#d4d4d4"/><rect x="74.7" y="753.93" width="5.6" height="1.4" fill="#d4d4d4"/><rect x="74.7" y="756.9999999999999" width="10.4" height="1.4" fill="#d4d4d4"/><rect x="74.7" y="760.0699999999999" width="7.3" height="1.4" fill="#d4d4d4"/><circle cx="77" cy="782.93" r="6.9" fill="none" stroke="#519aba" stroke-width="1.3"/><rect x="76.1" y="780.43" width="1.8" height="5.6" fill="#519aba"/><rect x="74.9" y="785.43" width="4.2" height="1.2" fill="#519aba"/><rect x="75.2" y="780.43" width="2" height="1.1" fill="#519aba"/><rect x="76.1" y="777.63" width="1.8" height="1.8" fill="#519aba"/></svg>
<div style="position:absolute;left:287px;top:464px;width:672px;height:41px;background:#181818;"></div>
<div style="position:absolute;left:287px;top:505px;width:672px;height:1px;background:#2b2b2b;"></div>
<div style="position:absolute;left:287px;top:464px;width:237px;height:42px;background:#1f1f1f;"></div>
<div style="position:absolute;left:287px;top:464px;width:237px;height:1px;background:#0078d4;"></div>
<div style="position:absolute;left:524px;top:464px;width:1px;height:41px;background:#2b2b2b;"></div>
<svg style="position:absolute;left:0;top:0" width="959" height="923"><circle cx="307.6" cy="487.6" r="1.6" fill="#e37933"/><path d="M306 483.6 A4.6 4.6 0 0 1 310.9 488.6" fill="none" stroke="#e37933" stroke-width="1.9"/><path d="M306 480.6 A7.9 7.9 0 0 1 314.2 488.6" fill="none" stroke="#e37933" stroke-width="1.9"/><circle cx="380.90000000000003" cy="521.8000000000001" r="1.6" fill="#e37933"/><path d="M379.3 517.8000000000001 A4.6 4.6 0 0 1 384.2 522.8000000000001" fill="none" stroke="#e37933" stroke-width="1.9"/><path d="M379.3 514.8000000000001 A7.9 7.9 0 0 1 387.5 522.8000000000001" fill="none" stroke="#e37933" stroke-width="1.9"/><path d="M501 479.5 L511.2 489.7 M511.2 479.5 L501 489.7" stroke="#ffffff" stroke-width="1.4"/><path d="M359.5 514.5 L365.0 519.5 L359.5 524.5" fill="none" stroke="#a9a9a9" stroke-width="1.3"/></svg>
<div class="t" style="left:326.00px;top:477.66px;font-size:16px;line-height:16px;color:#ffffff;font-weight:normal;font-style:italic;transform:scaleX(0.9536);">slam_kerlouduav.launch</div>
<div class="t" style="left:306.50px;top:511.96px;font-size:16px;line-height:16px;color:#a9a9a9;font-weight:normal;font-style:normal;transform:scaleX(0.9543);">launch</div>
<div class="t" style="left:398.80px;top:511.96px;font-size:16px;line-height:16px;color:#a9a9a9;font-weight:normal;font-style:normal;transform:scaleX(0.9833);">slam_kerlouduav.launch</div>
<div class="t" style="left:297.00px;top:536.70px;font-size:17.6px;line-height:17.6px;color:#6e7681;font-weight:normal;font-style:normal;width:40px;text-align:right;">1</div>
<div class="t" style="left:297.00px;top:559.52px;font-size:17.6px;line-height:17.6px;color:#6e7681;font-weight:normal;font-style:normal;width:40px;text-align:right;">2</div>
<div class="t" style="left:297.00px;top:582.34px;font-size:17.6px;line-height:17.6px;color:#6e7681;font-weight:normal;font-style:normal;width:40px;text-align:right;">3</div>
<div class="t" style="left:297.00px;top:605.16px;font-size:17.6px;line-height:17.6px;color:#cccccc;font-weight:normal;font-style:normal;width:40px;text-align:right;">4</div>
<div class="t" style="left:297.00px;top:627.98px;font-size:17.6px;line-height:17.6px;color:#6e7681;font-weight:normal;font-style:normal;width:40px;text-align:right;">5</div>
<div class="t" style="left:297.00px;top:650.80px;font-size:17.6px;line-height:17.6px;color:#6e7681;font-weight:normal;font-style:normal;width:40px;text-align:right;">6</div>
<div class="t" style="left:297.00px;top:673.62px;font-size:17.6px;line-height:17.6px;color:#6e7681;font-weight:normal;font-style:normal;width:40px;text-align:right;">7</div>
<div class="t" style="left:297.00px;top:696.44px;font-size:17.6px;line-height:17.6px;color:#3e3e3e;font-weight:normal;font-style:normal;width:40px;text-align:right;">8</div>
<div style="position:absolute;left:369px;top:600.5px;width:590px;height:21.5px;background:transparent;box-sizing:border-box;border:1px solid #282828;border-right:none;"></div>
<div style="position:absolute;left:369px;top:555.12px;width:1px;height:113.57999999999993px;background:#404040;"></div>
<div style="position:absolute;left:384px;top:577.9399999999999px;width:1px;height:22.3px;background:#707070;"></div>
<div style="position:absolute;left:384.5px;top:600px;width:7.8px;height:22px;background:rgba(0,100,0,0.15);box-sizing:border-box;border:1px solid #888888;"></div>
<div style="position:absolute;left:459px;top:600px;width:9.5px;height:22px;background:rgba(0,100,0,0.15);box-sizing:border-box;border:1px solid #888888;"></div>
<div class="t" style="left:368.90px;top:535.90px;font-size:17.6px;line-height:17.6px;color:#cccccc;font-weight:normal;font-style:normal;transform:scaleX(0.9831);"><span style="color:#808080">&lt;</span><span style="color:#569cd6">launch</span><span style="color:#808080">&gt;</span></div>
<div class="t" style="left:383.90px;top:558.72px;font-size:17.6px;line-height:17.6px;color:#cccccc;font-weight:normal;font-style:normal;transform:scaleX(1.0141);"><span style="color:#808080">&lt;</span><span style="color:#569cd6">include</span> <span style="color:#9cdcfe">file</span><span style="color:#cccccc">=</span><span style="color:#ce9178">&quot;$(find px4_realsense_bridge)/launch/bridge_mavros.launch&quot;</span></div>
<div class="t" style="left:398.90px;top:581.54px;font-size:17.6px;line-height:17.6px;color:#cccccc;font-weight:normal;font-style:normal;transform:scaleX(1.0184);"><span style="color:#808080">&lt;</span><span style="color:#569cd6">arg</span> <span style="color:#9cdcfe">name</span><span style="color:#cccccc">=</span><span style="color:#ce9178">&quot;fcu_url&quot;</span> <span style="color:#9cdcfe">value</span><span style="color:#cccccc">=</span><span style="color:#ce9178">&quot;/dev/ttyPixhawk:921600&quot;</span><span style="color:#808080">/&gt;</span></div>
<div class="t" style="left:383.90px;top:604.36px;font-size:17.6px;line-height:17.6px;color:#cccccc;font-weight:normal;font-style:normal;transform:scaleX(1.0478);"><span style="color:#808080">&lt;/</span><span style="color:#569cd6">include</span><span style="color:#808080">&gt;</span></div>
<div class="t" style="left:368.90px;top:672.82px;font-size:17.6px;line-height:17.6px;color:#cccccc;font-weight:normal;font-style:normal;transform:scaleX(1.0024);"><span style="color:#808080">&lt;/</span><span style="color:#569cd6">launch</span><span style="color:#808080">&gt;</span></div>
</body></html>
